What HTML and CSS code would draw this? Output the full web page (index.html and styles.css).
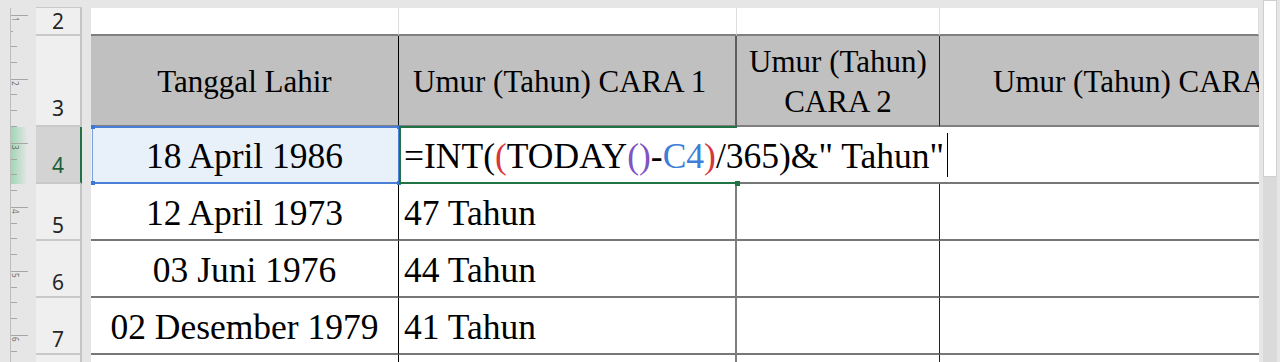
FILE: index.html
```html
<!DOCTYPE html>
<html>
<head>
<meta charset="utf-8">
<link rel="stylesheet" href="styles.css">
</head>
<body>
<div class="app">
  <div class="workspace">
    <div class="ruler">
      <svg width="36" height="354" viewBox="0 0 36 354">
        <defs>
          <linearGradient id="g" x1="0" y1="0" x2="1" y2="0">
            <stop offset="0" stop-color="#7fcf9c" stop-opacity="0.7"/>
            <stop offset="1" stop-color="#7fcf9c" stop-opacity="0"/>
          </linearGradient>
        </defs>
        <rect x="10.5" y="119" width="17" height="57" fill="url(#g)"/>
        <line x1="10.5" y1="0" x2="10.5" y2="354" stroke="#bdbdbd"/>
        <g stroke="#a6a6a6" stroke-width="1">
          <line x1="11" y1="7.5" x2="28" y2="7.5"/>
          <line x1="11" y1="23.5" x2="13" y2="23.5"/>
          <line x1="11" y1="38.5" x2="17" y2="38.5"/>
          <line x1="11" y1="54.5" x2="17" y2="54.5"/>
          <line x1="11" y1="71.5" x2="28" y2="71.5"/>
          <line x1="11" y1="86.5" x2="17" y2="86.5"/>
          <line x1="11" y1="102.5" x2="17" y2="102.5"/>
          <line x1="11" y1="118.5" x2="17" y2="118.5"/>
          <line x1="11" y1="135.5" x2="28" y2="135.5"/>
          <line x1="11" y1="151.5" x2="17" y2="151.5"/>
          <line x1="11" y1="166.5" x2="17" y2="166.5"/>
          <line x1="11" y1="182.5" x2="17" y2="182.5"/>
          <line x1="11" y1="199.5" x2="28" y2="199.5"/>
          <line x1="11" y1="215.5" x2="17" y2="215.5"/>
          <line x1="11" y1="230.5" x2="17" y2="230.5"/>
          <line x1="11" y1="246.5" x2="17" y2="246.5"/>
          <line x1="11" y1="263.5" x2="28" y2="263.5"/>
          <line x1="11" y1="279.5" x2="17" y2="279.5"/>
          <line x1="11" y1="294.5" x2="17" y2="294.5"/>
          <line x1="11" y1="310.5" x2="17" y2="310.5"/>
          <line x1="11" y1="327.5" x2="28" y2="327.5"/>
          <line x1="11" y1="343.5" x2="17" y2="343.5"/>
        </g>
        <g class="rlabel">
          <text transform="translate(12 9) rotate(90)">1</text>
          <text transform="translate(12 73) rotate(90)">2</text>
          <text transform="translate(12 137) rotate(90)">3</text>
          <text transform="translate(12 201) rotate(90)">4</text>
          <text transform="translate(12 265) rotate(90)">5</text>
          <text transform="translate(12 329) rotate(90)">6</text>
        </g>
      </svg>
    </div>
    <div class="rowheads">
      <div class="rh rh-top">2</div>
      <div class="rh rh-hi">3</div>
      <div class="rh rh-hi rh-active">4</div>
      <div class="rh">5</div>
      <div class="rh">6</div>
      <div class="rh">7</div>
      <div class="rh"></div>
    </div>
    <div class="sheet">
      <div class="c blank cb"></div>
      <div class="c blank cc"></div>
      <div class="c blank cd"></div>
      <div class="c blank ce"></div>

      <div class="c hd cb">Tanggal Lahir</div>
      <div class="c hd cc hd-left">Umur (Tahun) CARA 1</div>
      <div class="c hd cd hd-two">Umur (Tahun)<br>CARA 2</div>
      <div class="c hd ce hd-e">Umur (Tahun) CARA 3</div>

      <div class="c cb ref">18 April 1986<span class="refbox"><i class="hdl tl"></i><i class="hdl tr"></i><i class="hdl bl"></i><i class="hdl br"></i></span></div>
      <div class="c cc editing"><span class="ftext">=INT(<span class="f-red">(</span>TODAY<span class="f-pur">()</span>-<span class="f-blue">C4</span><span class="f-red">)</span>/365)&amp;" Tahun"<span class="caret"></span></span><span class="editbox"><i class="ghdl"></i></span></div>
      <div class="c cd nob"></div>
      <div class="c ce"></div>

      <div class="c cb">12 April 1973</div>
      <div class="c cc">47 Tahun</div>
      <div class="c cd"></div>
      <div class="c ce"></div>

      <div class="c cb">03 Juni 1976</div>
      <div class="c cc">44 Tahun</div>
      <div class="c cd"></div>
      <div class="c ce"></div>

      <div class="c cb">02 Desember 1979</div>
      <div class="c cc">41 Tahun</div>
      <div class="c cd"></div>
      <div class="c ce"></div>

      <div class="c cb"></div>
      <div class="c cc"></div>
      <div class="c cd"></div>
      <div class="c ce"></div>
    </div>
  </div>
  <div class="vscroll">
    <div class="thumb"></div>
    <div class="track"></div>
  </div>
</div>
</body>
</html>
```

FILE: styles.css
```css
html, body {
  margin: 0;
  padding: 0;
}
body {
  width: 1280px;
  height: 362px;
  overflow: hidden;
  background: #e6e6e6;
}
.app {
  display: flex;
  width: 1280px;
  height: 362px;
}
.workspace {
  display: flex;
  width: 1263px;
  padding-top: 8px;
  box-sizing: border-box;
  height: 362px;
}
.ruler {
  width: 36px;
  flex: none;
}
.ruler svg {
  display: block;
}
.rlabel text {
  font-family: "Noto Sans", "DejaVu Sans", sans-serif;
  font-size: 8px;
  fill: #6a6a6a;
}
.rowheads {
  width: 46px;
  flex: none;
  display: grid;
  grid-template-rows: 28px 91px 57px 57px 57px 57px 57px;
  border-top: 1px solid #c9c9c9;
  margin-top: -1px;
  overflow: hidden;
  height: 355px;
}
.rh {
  box-sizing: border-box;
  display: flex;
  align-items: flex-end;
  justify-content: center;
  font-family: "Noto Sans", "Open Sans", sans-serif;
  font-size: 21px;
  line-height: 21px;
  color: #262626;
  background: #efefef;
  border-bottom: 2px solid #c9c9c9;
  border-right: 2px solid #c4c4c4;
  padding-bottom: 3px;
}
.rh-top {
  padding-bottom: 2px;
}
.rh-hi {
  padding-bottom: 6px;
}
.rh-active {
  background: #d3d3d3;
  border-right-color: #217346;
  color: #1d5f3a;
}
.sheet {
  margin-left: 9px;
  width: 1168px;
  height: 354px;
  flex: none;
  overflow: hidden;
  display: grid;
  grid-template-columns: 308px 338px 203px 319px;
  grid-template-rows: 28px 91px 57px 57px 57px 57px 57px;
  background: #fff;
}
.c {
  box-sizing: border-box;
  display: flex;
  align-items: flex-end;
  font-family: "Liberation Serif", "Times New Roman", serif;
  font-size: 35.5px;
  line-height: 35px;
  color: #000;
  padding-bottom: 8px;
  border-bottom: 2px solid #777;
  white-space: nowrap;
  overflow: hidden;
  background: #fff;
}
.cb {
  justify-content: center;
  border-right: 1px solid #000;
}
.cc {
  padding-left: 5px;
  border-right: 2px solid #7f7f7f;
}
.cd {
  border-right: 1px solid #222;
}
.blank {
  border-right: 1px solid #dedede;
  border-bottom-color: #7f7f7f;
  padding: 0;
}
.blank.cc {
  border-right-width: 1px;
}
.hd {
  background: #c0c0c0;
  font-size: 31px;
  line-height: 40px;
  padding-bottom: 23px;
  border-bottom-color: #7f7f7f;
}
.hd.cc {
  border-right-color: #5e5e5e;
}
.hd-left {
  padding-left: 14px;
}
.hd-two {
  justify-content: center;
  text-align: center;
  padding-bottom: 3px;
  white-space: normal;
}
.hd-e {
  padding-left: 53px;
}
.ref {
  background: #e8f0fa;
  position: relative;
  overflow: visible;
}
.refbox {
  position: absolute;
  top: -1px;
  left: 1px;
  right: -1px;
  bottom: -2px;
  border-top: 2px solid #4a7fd6;
  border-bottom: 2px solid #4a7fd6;
  border-left: 1px solid #7aa3e2;
  border-right: 1px solid #4a7fd6;
}
.hdl {
  position: absolute;
  width: 4px;
  height: 4px;
  background: #3f78d4;
}
.hdl.tl { left: -2px; top: -3px; }
.hdl.tr { right: -3px; top: -3px; }
.hdl.bl { left: -2px; bottom: -3px; }
.hdl.br { right: -3px; bottom: -3px; }
.editing {
  position: relative;
  z-index: 2;
  overflow: visible;
  border-right: none;
}
.ftext {
  flex: none;
  white-space: nowrap;
}
.editbox {
  position: absolute;
  top: -1px;
  left: 0;
  right: 0;
  bottom: -2px;
  border-top: 2px solid #217346;
  border-left: 2px solid #217346;
  border-bottom: 2px solid #217346;
}
.ghdl {
  position: absolute;
  right: -3px;
  bottom: -4px;
  width: 5px;
  height: 5px;
  background: #217346;
}
.nob {
  border-right: none;
}
.f-red { color: #d6363c; }
.f-pur { color: #8053c4; }
.f-blue { color: #3d7fd8; }
.caret {
  display: inline-block;
  width: 1px;
  height: 44px;
  background: #000;
  margin: -10px 0 -9px 3px;
  vertical-align: baseline;
}
.vscroll {
  width: 14px;
  margin-right: 3px;
  display: flex;
  flex-direction: column;
  height: 362px;
}
.thumb {
  height: 177px;
  box-sizing: border-box;
  background: #fff;
  border: 1px solid #d0d0d0;
  flex: none;
}
.track {
  flex: 1;
  background: #dadada;
}
```
